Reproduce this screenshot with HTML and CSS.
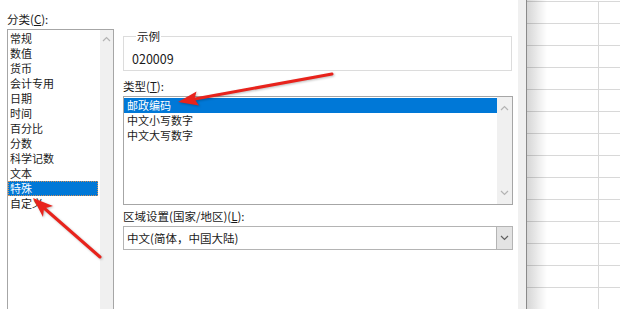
FILE: index.html
```html
<!DOCTYPE html>
<html lang="zh-CN">
<head>
  <meta charset="UTF-8" />
  <title>设置单元格格式 - 特殊</title>
  <link rel="stylesheet" href="styles.css">
</head>
<body>
  <div class="screen">
    <div class="dialog">
      <div class="category">
        <div class="label">分类(<u>C</u>):</div>
        <div class="listbox cat-list">
          <ul class="items">
            <li>常规</li>
            <li>数值</li>
            <li>货币</li>
            <li>会计专用</li>
            <li>日期</li>
            <li>时间</li>
            <li>百分比</li>
            <li>分数</li>
            <li>科学记数</li>
            <li>文本</li>
            <li class="selected focused">特殊</li>
            <li>自定义</li>
          </ul>
          <div class="vscroll">
            <svg class="chev" width="9" height="6" viewBox="0 0 9 6"><polyline points="1,5 4.5,1.5 8,5" /></svg>
          </div>
        </div>
      </div>

      <div class="details">
        <fieldset class="sample">
          <legend>示例</legend>
          <div class="sample-value">020009</div>
        </fieldset>

        <div class="label">类型(<u>T</u>):</div>
        <div class="listbox type-list">
          <ul class="items">
            <li class="selected">邮政编码</li>
            <li>中文小写数字</li>
            <li>中文大写数字</li>
          </ul>
          <div class="vscroll split">
            <svg class="chev" width="9" height="6" viewBox="0 0 9 6"><polyline points="1,5 4.5,1.5 8,5" /></svg>
            <svg class="chev" width="9" height="6" viewBox="0 0 9 6"><polyline points="1,1 4.5,4.5 8,1" /></svg>
          </div>
        </div>

        <div class="label">区域设置(国家/地区)(<u>L</u>):</div>
        <div class="combo">
          <span class="combo-text">中文(简体，中国大陆)</span>
          <div class="combo-btn">
            <svg class="chev dark" width="9" height="6" viewBox="0 0 9 6"><polyline points="1,1 4.5,4.5 8,1" /></svg>
          </div>
        </div>
      </div>

      <div class="edge"></div>
    </div>

    <div class="sheet">
      <div class="row"><div class="cell"></div><div class="cell"></div></div>
      <div class="row"><div class="cell"></div><div class="cell"></div></div>
      <div class="row"><div class="cell"></div><div class="cell"></div></div>
      <div class="row"><div class="cell"></div><div class="cell"></div></div>
      <div class="row"><div class="cell"></div><div class="cell"></div></div>
      <div class="row"><div class="cell"></div><div class="cell"></div></div>
      <div class="row"><div class="cell"></div><div class="cell"></div></div>
      <div class="row"><div class="cell"></div><div class="cell"></div></div>
      <div class="row"><div class="cell"></div><div class="cell"></div></div>
      <div class="row"><div class="cell"></div><div class="cell"></div></div>
      <div class="row"><div class="cell"></div><div class="cell"></div></div>
      <div class="row"><div class="cell"></div><div class="cell"></div></div>
      <div class="row"><div class="cell"></div><div class="cell"></div></div>
      <div class="row"><div class="cell"></div><div class="cell"></div></div>
    </div>

    <!-- red annotation arrows drawn over the screenshot -->
    <svg class="arrows" width="620" height="309" viewBox="0 0 620 309">
      <line x1="332" y1="74" x2="192" y2="99.5" />
      <polygon points="178,102 199,105.5 194.5,99 196.5,91.5" />
      <line x1="100" y1="257" x2="44" y2="208" />
      <polygon points="33,198 53,206 44,208.5 43,217" />
    </svg>
  </div>
</body>
</html>
```

FILE: styles.css
```css
* {
  box-sizing: border-box;
  margin: 0;
  padding: 0;
}

body {
  background: #ffffff;
  font-family: "Noto Sans CJK SC", "Noto Sans", sans-serif;
  font-size: 11px;
  color: #1a1a1a;
}

.screen {
  position: relative;
  width: 620px;
  height: 309px;
  overflow: hidden;
  display: flex;
}

.dialog {
  width: 526px;
  height: 309px;
  background: #ffffff;
  display: flex;
  padding-left: 7px;
}

.label {
  height: 16px;
  line-height: 16px;
  font-size: 11.5px;
  white-space: nowrap;
}

.label u {
  text-decoration: underline;
  text-underline-offset: 1px;
}

/* left column */
.category {
  width: 107px;
  padding-top: 11px;
  margin-right: 9px;
}

.category .label {
  margin-bottom: 2px;
}

.listbox {
  display: flex;
  border: 1px solid #a6a6a6;
  background: #ffffff;
}

.items {
  list-style: none;
  flex: 1;
  padding-top: 1px;
}

.items li {
  height: 15px;
  line-height: 15px;
  padding-left: 2px;
  white-space: nowrap;
}

.items li.selected {
  background: #0078d7;
  color: #ffffff;
}

.items li.focused {
  outline: 1px dotted #d0905a;
  outline-offset: -1px;
}

.cat-list {
  height: 290px;
}

.cat-list .items {
  margin-right: 2px;
}

.vscroll {
  width: 13px;
  background: #f0f0f0;
  display: flex;
  flex-direction: column;
  align-items: center;
  padding-top: 6px;
}

.vscroll.split {
  width: 15px;
  justify-content: space-between;
  padding: 8px 0 8px;
}

.chev polyline {
  fill: none;
  stroke: #b4b4b4;
  stroke-width: 1.2;
}

.chev.dark polyline {
  stroke: #606060;
}

/* right column */
.details {
  width: 390px;
  padding-top: 28px;
}

.sample {
  width: 389px;
  border: 1px solid #dcdcdc;
  padding: 7px 8px 3px;
  margin-bottom: 7px;
}

.sample legend {
  margin-left: 4px;
  padding: 0 1px;
  line-height: 16px;
  font-size: 11.5px;
}

.sample-value {
  height: 16px;
  line-height: 16px;
  font-size: 12.5px;
}

.details .label {
  margin-bottom: 2px;
}

.type-list {
  height: 109px;
  margin-bottom: 3px;
}

.type-list .items li {
  padding-left: 3px;
}

.combo {
  margin-top: 1px;
  height: 24px;
  border: 1px solid #b4b4b4;
  display: flex;
  align-items: center;
}

.combo-text {
  flex: 1;
  padding-left: 3px;
  line-height: 16px;
  font-size: 11.5px;
}

.combo-btn {
  width: 16px;
  height: 22px;
  background: #e3e3e3;
  border-left: 1px solid #b4b4b4;
  display: flex;
  align-items: center;
  justify-content: center;
}

.edge {
  margin-left: 5px;
  width: 8px;
  background: #f0f0f0;
}

/* spreadsheet behind the dialog */
.sheet {
  position: relative;
  width: 94px;
  height: 309px;
  border-left: 1px solid #8a8a8a;
  padding-top: 1px;
  background: #ffffff;
}

.sheet::before {
  content: "";
  position: absolute;
  top: 0;
  left: 0;
  width: 20px;
  height: 100%;
  background: linear-gradient(to right, rgba(0,0,0,0.16), rgba(0,0,0,0));
}

.row {
  display: flex;
  height: 22px;
  border-top: 1px solid #d8d8d8;
}

.cell {
  width: 72px;
  border-right: 1px solid #d8d8d8;
}

.cell + .cell {
  flex: 1;
  border-right: none;
}

/* annotation arrows */
.arrows {
  position: absolute;
  top: 0;
  left: 0;
  pointer-events: none;
  filter: drop-shadow(1px 1px 1px rgba(0,0,0,0.25));
}

.arrows line {
  stroke: #e8231c;
  stroke-width: 3;
  stroke-linecap: round;
}

.arrows polygon {
  fill: #e8231c;
}
```
